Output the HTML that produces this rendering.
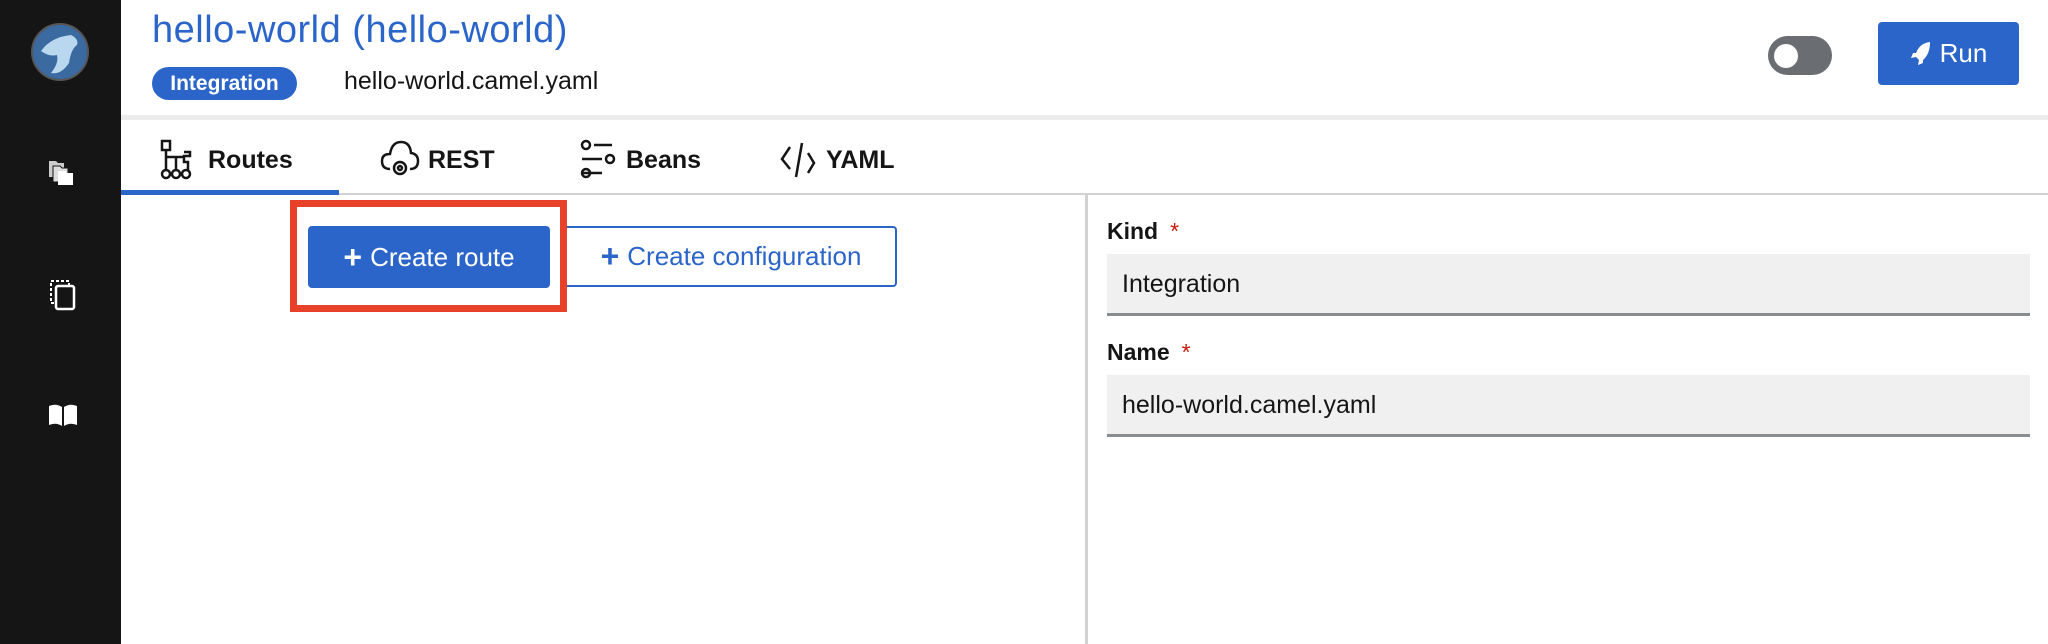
<!DOCTYPE html>
<html><head><meta charset="utf-8"><style>
*{box-sizing:border-box;margin:0;padding:0}
body{width:2048px;height:644px;background:#fff;font-family:"Liberation Sans",sans-serif;position:relative;overflow:hidden}
.abs{position:absolute}
.side{left:0;top:0;width:121px;height:644px;background:#151515}
.title{left:152px;top:9px;font-size:38px;color:#2b65c9;white-space:nowrap;letter-spacing:0.5px}
.badge{left:152px;top:67px;width:145px;height:33px;border-radius:17px;background:#2b65c9;color:#fff;font-weight:bold;font-size:21px;text-align:center;line-height:33px}
.fn{left:344px;top:67px;font-size:25px;color:#151515}
.tab{top:142px;font-size:25px;font-weight:bold;color:#151515;display:flex;align-items:center;gap:8px}
.btn{border-radius:4px;font-size:26px;display:flex;align-items:center;justify-content:center;gap:8px}
.lbl{left:1107px;font-size:23px;font-weight:bold;color:#151515}
.lbl span{color:#c9190b;margin-left:12px;font-weight:normal}
.inp{left:1107px;width:923px;height:62px;background:#f0f0f0;border-bottom:3px solid #8a8d90;font-size:25px;color:#151515;padding-left:15px;line-height:60px}
</style></head><body>
<div class="abs side"></div>
<svg class="abs" style="left:31px;top:23px" width="58" height="58"><circle cx="29" cy="29" r="28" fill="#3a6aa0" stroke="#555" stroke-width="2"/><path d="M10 28 Q20 14 40 12 Q48 16 46 22 Q40 26 38 40 Q30 52 20 50 Q28 40 26 32 Q18 34 10 28Z" fill="#b9d8ef"/></svg>
<svg class="abs" style="left:47px;top:159px" width="30" height="28"><path d="M2 2h7l2 2h6v14H2z" fill="#ccc"/><path d="M6 7h7l2 2h6v14H6z" fill="#ddd" stroke="#151515"/><path d="M11 12h7l2 2h6v12H11z" fill="#fff"/></svg>
<svg class="abs" style="left:49px;top:279px" width="28" height="32"><rect x="2" y="2" width="18" height="22" fill="none" stroke="#fff" stroke-width="2" stroke-dasharray="3 2"/><rect x="7" y="7" width="18" height="23" rx="2" fill="#151515" stroke="#fff" stroke-width="2.5"/></svg>
<svg class="abs" style="left:48px;top:403px" width="30" height="24"><path d="M1 3q7-3 13 1v19q-6-4-13-1zM16 4q6-4 13-1v19q-7-3-13 1z" fill="#fff"/></svg>
<div class="abs title">hello-world (hello-world)</div>
<div class="abs badge">Integration</div>
<div class="abs fn">hello-world.camel.yaml</div>
<div class="abs" style="left:1768px;top:36px;width:64px;height:39px;border-radius:20px;background:#6a6e73"></div>
<div class="abs" style="left:1774px;top:44px;width:24px;height:24px;border-radius:12px;background:#fff"></div>
<div class="abs btn" style="left:1878px;top:22px;width:141px;height:63px;background:#2b65c9;color:#fff;font-size:26px">
<svg width="22" height="26" viewBox="0 0 22 26"><path d="M20 1Q10 2 6 12L3 12 1 17 6 16 9 19 8 24 13 22 13 19Q20 13 20 1Z" fill="#fff"/></svg>Run</div>
<div class="abs" style="left:121px;top:115px;width:1927px;height:5px;background:#ececec"></div>
<div class="abs" style="left:121px;top:193px;width:1927px;height:2px;background:#d2d2d2"></div>
<div class="abs" style="left:121px;top:190px;width:218px;height:5px;background:#2b65c9"></div>
<div class="abs tab" style="left:160px;top:139px"><svg width="40" height="42" viewBox="0 0 40 42" fill="none" stroke="#151515" stroke-width="2.5"><rect x="2" y="2" width="8" height="9"/><path d="M6 11v19M6 18h10v12M16 18h8M24 13h6v4h-6v6h4v9"/><circle cx="6" cy="35" r="4"/><circle cx="16" cy="35" r="4"/><circle cx="26" cy="35" r="4"/></svg>Routes</div>
<div class="abs tab" style="left:380px;top:139px"><svg width="40" height="42" viewBox="0 0 40 42" fill="none" stroke="#151515" stroke-width="2.5"><path d="M10 30Q2 30 2 22Q2 15 10 15Q12 3 21 3Q30 3 31 14Q38 15 38 22Q38 30 30 30"/><circle cx="20" cy="29" r="6"/><circle cx="20" cy="29" r="2"/></svg>REST</div>
<div class="abs tab" style="left:580px;top:139px"><svg width="38" height="42" viewBox="0 0 38 42" fill="none" stroke="#151515" stroke-width="2.5"><circle cx="6" cy="6" r="4"/><path d="M14 6h18M2 20h20M2 34h20"/><circle cx="30" cy="20" r="4"/><circle cx="6" cy="34" r="4"/></svg>Beans</div>
<div class="abs tab" style="left:780px;top:139px"><svg width="38" height="42" viewBox="0 0 38 42" fill="none" stroke="#151515" stroke-width="2.5"><path d="M10 8 2 20 10 30M28 14 34 24 28 34M22 4 16 38"/></svg>YAML</div>
<div class="abs" style="left:1085px;top:195px;width:3px;height:449px;background:#d2d2d2"></div>
<div class="abs" style="left:290px;top:200px;width:277px;height:112px;border:7px solid #e8412a"></div>
<div class="abs btn" style="left:308px;top:226px;width:242px;height:62px;background:#2b65c9;color:#fff"><span style="font-size:32px;font-weight:bold">+</span>Create route</div>
<div class="abs btn" style="left:567px;top:226px;width:330px;height:61px;border:2px solid #2b65c9;border-left:none;border-radius:0 4px 4px 0;color:#2b65c9"><span style="font-size:32px;font-weight:bold">+</span>Create configuration</div>
<div class="abs lbl" style="top:218px">Kind<span>*</span></div>
<div class="abs inp" style="top:254px">Integration</div>
<div class="abs lbl" style="top:339px">Name<span>*</span></div>
<div class="abs inp" style="top:375px">hello-world.camel.yaml</div>
</body></html>
